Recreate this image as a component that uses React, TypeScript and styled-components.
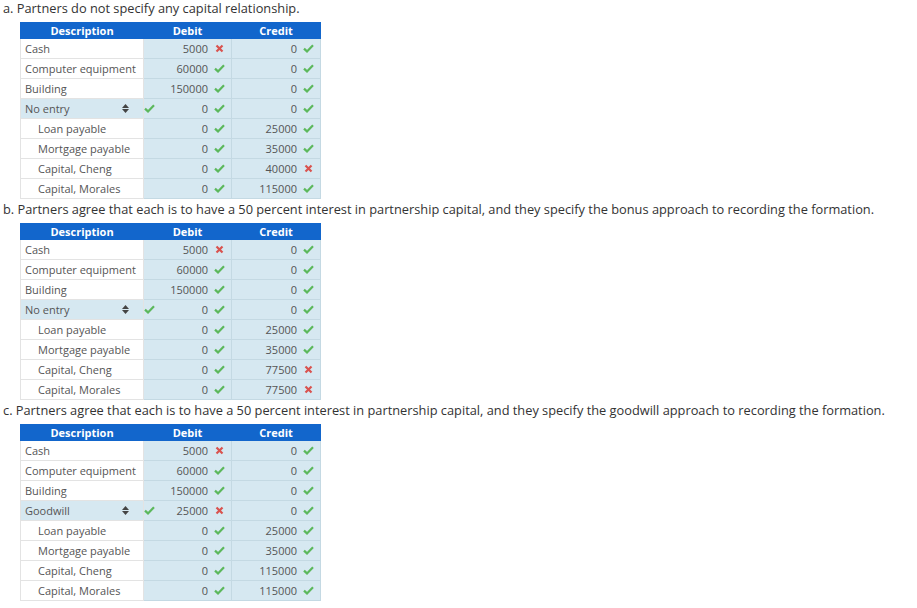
import { createGlobalStyle, styled } from "styled-components";

const GlobalStyle = createGlobalStyle`
  body {
    margin: 0;
    background: #ffffff;
    font-family: "Open Sans", "Liberation Sans", sans-serif;
  }
`;

const Page = styled.div`
  padding: 0 0 0 3px;
  width: 917px;
`;

const Section = styled.section`
  margin-bottom: 2px;
`;

const Title = styled.div`
  font-size: 12.8px;
  color: #333333;
  height: 22px;
  line-height: 16px;
`;

const Table = styled.table`
  margin-left: 17px;
  border-collapse: collapse;
  table-layout: fixed;
  width: 297px;
  font-size: 11px;
  color: #555555;
`;

const Head = styled.th<{ $w: number }>`
  width: ${(p) => p.$w}px;
  height: 15px;
  padding: 0;
  background: #1266cc;
  color: #ffffff;
  font-weight: 700;
  font-size: 11px;
  line-height: 15px;
  text-align: center;
  border: 1px solid #1266cc;
`;

const DescCell = styled.td<{ $indent?: boolean; $select?: boolean }>`
  height: 19px;
  padding: 0 0 0 ${(p) => (p.$indent ? "17px" : "4px")};
  background: ${(p) => (p.$select ? "#d6e8f1" : "#ffffff")};
  border: 1px solid #e3e3e3;
  white-space: nowrap;
`;

const SelectBox = styled.div`
  display: flex;
  align-items: center;
  justify-content: space-between;
  padding-right: 14px;
`;

const Arrows = styled.span`
  display: flex;
  flex-direction: column;
  gap: 1px;
`;

const NumCell = styled.td`
  height: 19px;
  padding: 0 6px 0 2px;
  background: #d6e8f1;
  border: 1px solid #c4d9e3;
  text-align: right;
  white-space: nowrap;
`;

const NumInner = styled.div`
  display: flex;
  align-items: center;
  justify-content: flex-end;
  gap: 6px;
`;

const Lead = styled.span`
  margin-right: auto;
  margin-left: -2px;
  display: flex;
`;

const Mark = styled.span`
  display: inline-flex;
  width: 11px;
  justify-content: center;
`;

function Check() {
  return (
    <svg width="11" height="9" viewBox="0 0 11 9">
      <path d="M1 4.6 L4 7.4 L10 1.2" fill="none" stroke="#5cb85c" strokeWidth="2.2" />
    </svg>
  );
}

function Cross() {
  return (
    <svg width="9" height="9" viewBox="0 0 9 9">
      <path d="M1.5 1.5 L7.5 7.5 M7.5 1.5 L1.5 7.5" fill="none" stroke="#d9534f" strokeWidth="2.2" />
    </svg>
  );
}

function Status({ ok }: { ok: boolean }) {
  return <Mark>{ok ? <Check /> : <Cross />}</Mark>;
}

type Row = {
  desc: string;
  debit: string;
  debitOk: boolean;
  credit: string;
  creditOk: boolean;
  indent?: boolean;
  select?: boolean;
};

const base = (entry: string, entryDebit: string, entryDebitOk: boolean, cheng: string, chengOk: boolean, morales: string, moralesOk: boolean): Row[] => [
  { desc: "Cash", debit: "5000", debitOk: false, credit: "0", creditOk: true },
  { desc: "Computer equipment", debit: "60000", debitOk: true, credit: "0", creditOk: true },
  { desc: "Building", debit: "150000", debitOk: true, credit: "0", creditOk: true },
  { desc: entry, debit: entryDebit, debitOk: entryDebitOk, credit: "0", creditOk: true, select: true },
  { desc: "Loan payable", debit: "0", debitOk: true, credit: "25000", creditOk: true, indent: true },
  { desc: "Mortgage payable", debit: "0", debitOk: true, credit: "35000", creditOk: true, indent: true },
  { desc: "Capital, Cheng", debit: "0", debitOk: true, credit: cheng, creditOk: chengOk, indent: true },
  { desc: "Capital, Morales", debit: "0", debitOk: true, credit: morales, creditOk: moralesOk, indent: true },
];

const sections = [
  {
    title: "a. Partners do not specify any capital relationship.",
    rows: base("No entry", "0", true, "40000", false, "115000", true),
  },
  {
    title:
      "b. Partners agree that each is to have a 50 percent interest in partnership capital, and they specify the bonus approach to recording the formation.",
    rows: base("No entry", "0", true, "77500", false, "77500", false),
  },
  {
    title:
      "c. Partners agree that each is to have a 50 percent interest in partnership capital, and they specify the goodwill approach to recording the formation.",
    rows: base("Goodwill", "25000", false, "115000", true, "115000", true),
  },
];

function JournalTable({ rows }: { rows: Row[] }) {
  return (
    <Table>
      <thead>
        <tr>
          <Head $w={122}>Description</Head>
          <Head $w={87}>Debit</Head>
          <Head $w={88}>Credit</Head>
        </tr>
      </thead>
      <tbody>
        {rows.map((r) => (
          <tr key={r.desc}>
            <DescCell $indent={r.indent} $select={r.select}>
              {r.select ? (
                <SelectBox>
                  <span>{r.desc}</span>
                  <Arrows>
                    <svg width="7" height="4" viewBox="0 0 7 4">
                      <path d="M0 4 L3.5 0 L7 4 Z" fill="#444" />
                    </svg>
                    <svg width="7" height="4" viewBox="0 0 7 4">
                      <path d="M0 0 L3.5 4 L7 0 Z" fill="#444" />
                    </svg>
                  </Arrows>
                </SelectBox>
              ) : (
                r.desc
              )}
            </DescCell>
            <NumCell>
              <NumInner>
                {r.select && (
                  <Lead>
                    <Check />
                  </Lead>
                )}
                <span>{r.debit}</span>
                <Status ok={r.debitOk} />
              </NumInner>
            </NumCell>
            <NumCell>
              <NumInner>
                <span>{r.credit}</span>
                <Status ok={r.creditOk} />
              </NumInner>
            </NumCell>
          </tr>
        ))}
      </tbody>
    </Table>
  );
}

export default function App() {
  return (
    <Page>
      <GlobalStyle />
      {sections.map((s) => (
        <Section key={s.title}>
          <Title>{s.title}</Title>
          <JournalTable rows={s.rows} />
        </Section>
      ))}
    </Page>
  );
}
